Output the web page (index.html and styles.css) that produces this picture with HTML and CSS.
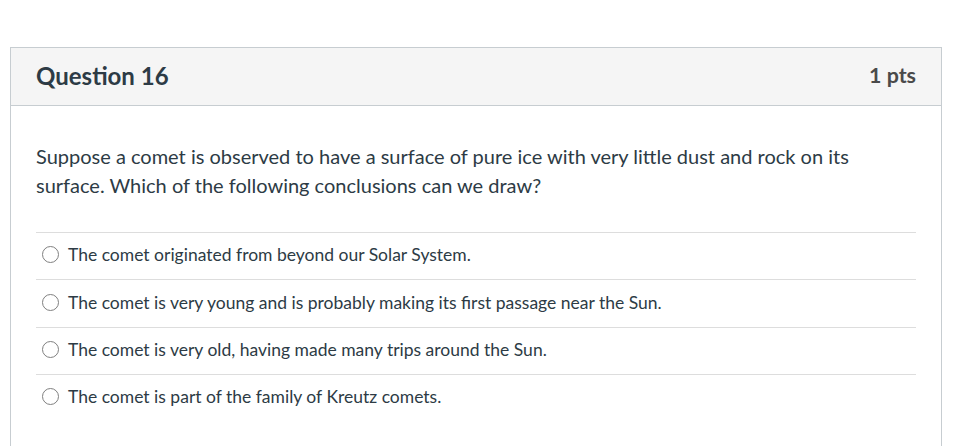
FILE: index.html
```html
<!DOCTYPE html>
<html>
<head>
<meta charset="utf-8">
<link rel="stylesheet" href="styles.css">
</head>
<body>
<div class="card">
  <div class="header">
    <h2 class="title">Question 16</h2>
    <span class="pts">1 pts</span>
  </div>
  <div class="content">
    <p class="question">Suppose a comet is observed to have a surface of pure ice with very little dust and rock on its surface. Which of the following conclusions can we draw?</p>
    <div class="answers">
      <label class="answer"><span class="radio"></span><span>The comet originated from beyond our Solar System.</span></label>
      <label class="answer"><span class="radio"></span><span>The comet is very young and is probably making its first passage near the Sun.</span></label>
      <label class="answer"><span class="radio"></span><span>The comet is very old, having made many trips around the Sun.</span></label>
      <label class="answer"><span class="radio"></span><span>The comet is part of the family of Kreutz comets.</span></label>
    </div>
  </div>
</div>
</body>
</html>
```
FILE: styles.css
```css
html, body {
  margin: 0;
  padding: 0;
  background: #fff;
}
body {
  font-family: Lato, "Open Sans", sans-serif;
  color: #2d3b45;
  padding: 47px 24px 0 10px;
}
.card {
  border: 1px solid #c7cdd1;
  border-bottom: none;
  height: 420px;
}
.header {
  display: flex;
  justify-content: space-between;
  align-items: center;
  height: 57px;
  box-sizing: content-box;
  background: #f5f5f5;
  border-bottom: 1px solid #c7cdd1;
  padding: 0 25px 0 25px;
}
.title {
  margin: 0 0 3px 0;
  font-size: 24px;
  font-weight: 700;
}
.pts {
  margin-bottom: 3px;
  font-size: 21.4px;
  font-weight: 700;
  color: #4a4a4a;
}
.content {
  padding: 36px 25px 0 25px;
}
.question {
  margin: 0 0 32px 0;
  font-size: 20px;
  line-height: 29px;
}
.answers {
  display: flex;
  flex-direction: column;
}
.answer {
  display: flex;
  align-items: center;
  gap: 9px;
  height: 47.4px;
  border-top: 1px solid #ddd;
  padding-left: 6px;
  padding-bottom: 3px;
  font-size: 17.5px;
  box-sizing: border-box;
}
.radio {
  width: 15px;
  height: 15px;
  border: 1px solid #808080;
  border-radius: 50%;
  flex: none;
}
```
